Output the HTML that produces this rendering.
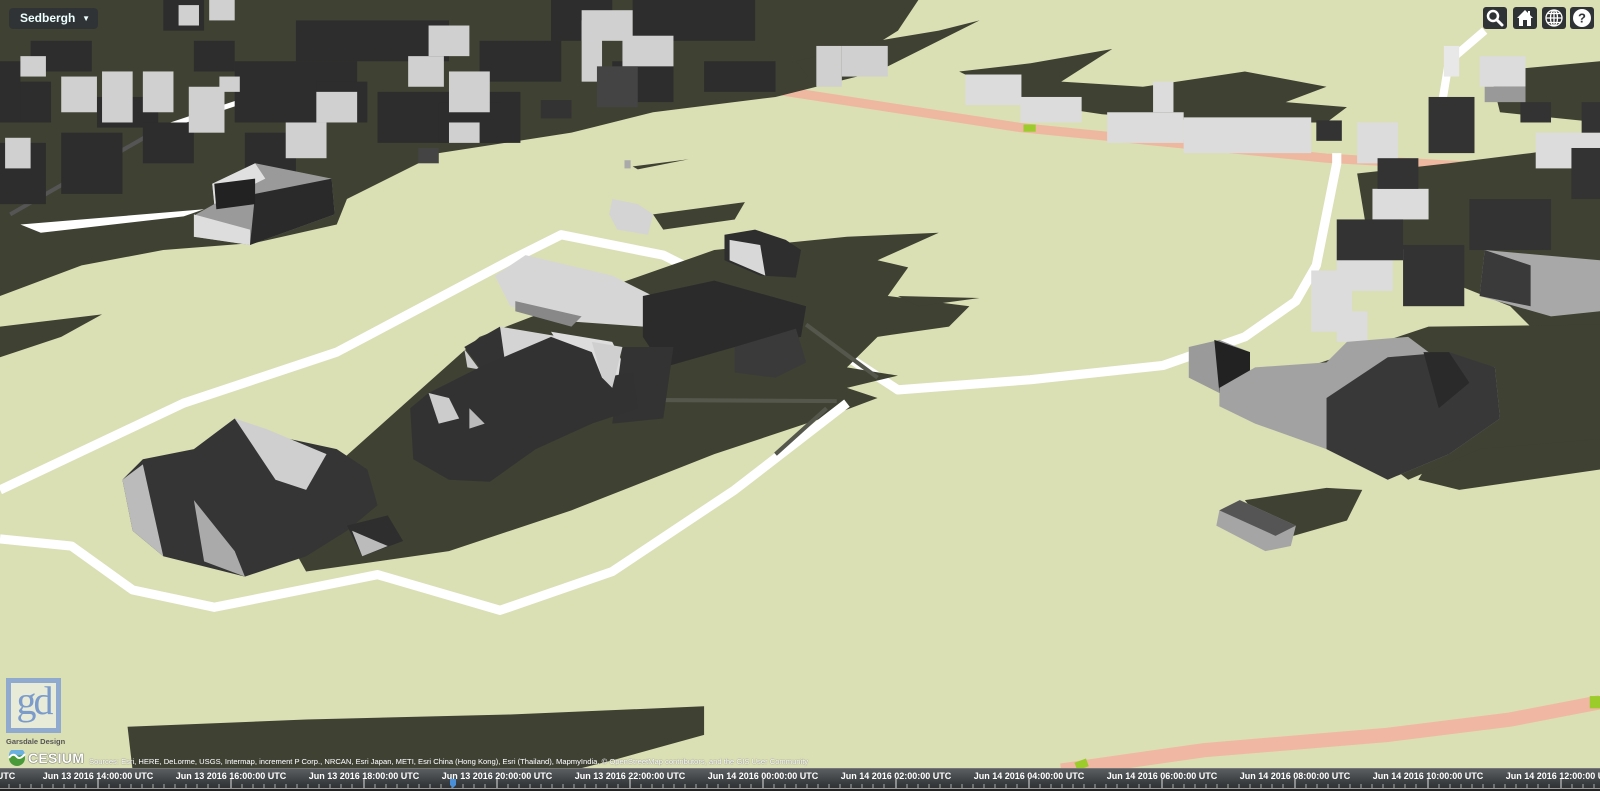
<!DOCTYPE html>
<html><head><meta charset="utf-8"><style>
html,body{margin:0;padding:0;width:1600px;height:791px;overflow:hidden;background:#dbdfb4;font-family:"Liberation Sans",sans-serif}
#map{position:absolute;left:0;top:0;width:1600px;height:791px}
.dd{position:absolute;left:9px;top:8px;width:89px;height:21px;background:#303336;border-radius:4px;color:#edffff;font-size:12px;font-weight:bold;line-height:21px;box-sizing:border-box;padding-left:11px}
.dd span{position:absolute;right:8px;top:0;font-size:8px}
.btn{position:absolute;top:7px;width:24px;height:22px;background:#303336;border-radius:3px}
.btn svg{position:absolute;left:0;top:0}
.logo{position:absolute;left:6px;top:678px;width:55px;height:55px;background:#8fa9cf;box-sizing:border-box;padding:5px}
.logo div{width:45px;height:45px;background:#e8ebd8;color:#7b9ccb;font-family:"Liberation Serif",serif;font-size:40px;line-height:36px;text-align:center;letter-spacing:-3px}
.gdt{position:absolute;left:6px;top:737px;font-size:7.5px;font-weight:bold;color:#555}
.ces{position:absolute;left:8px;top:750px;height:16px}
.ces b{position:absolute;left:20px;top:0px;font-size:14px;color:#fff;font-weight:bold;letter-spacing:0.3px;text-shadow:0 0 1px #333,0 0 1px #333}
.attr{position:absolute;left:89px;top:757px;font-size:7.6px;color:#fff;white-space:nowrap;text-shadow:0 0 1px #555}
.tl{position:absolute;left:0;top:768px;width:1600px;height:21px;background:linear-gradient(#5a5e60,#3c3f41 60%,#2c2e30);border-top:1px solid #777}
.tl .l{position:absolute;top:2px;font-size:9px;font-weight:bold;color:#fff;white-space:nowrap;transform:translateX(-50%)}
.bot{position:absolute;left:0;top:789px;width:1600px;height:2px;background:#222}
</style></head><body>
<svg id="map" viewBox="0 0 1568 775" preserveAspectRatio="none" xmlns="http://www.w3.org/2000/svg">
<rect width="1568" height="775" fill="#dbdfb4"/>
<path d="M740 85 L1000 125 L1300 155 L1568 170" stroke="#eeb8a0" stroke-width="9" fill="none"/>
<path d="M850 0 L760 80" stroke="#e8b8a0" stroke-width="5" fill="none"/>
<path d="M0 285 L120 230 L250 195" stroke="#e6b49c" stroke-width="6" fill="none"/>
<path d="M1040 755 L1180 735 L1360 720 L1480 705 L1568 688" stroke="#f0b8a2" stroke-width="14" fill="none"/>
<rect x="1054" y="745" width="12" height="8" fill="#9ccb2c" transform="rotate(-20 1060 749)"/>
<rect x="1558" y="682" width="10" height="12" fill="#9ccb2c"/>
<rect x="1003" y="122" width="12" height="7" fill="#9ccb2c"/>
<path d="M0 0 L900 0 L880 30 L840 55 L820 80 L760 95 L640 110 L560 130 L430 150 L340 195 L330 220 L250 238 L160 245 L80 260 L0 290 Z" fill="#3f4133"/>
<path d="M0 320 L100 308 L60 330 L0 350 Z" fill="#3f4133"/>
<path d="M20 220 L200 205 L180 212 L40 228 Z" fill="#fff"/>
<path d="M160 125 L250 95" stroke="#fff" stroke-width="5"/>
<path d="M10 210 L150 130" stroke="#555" stroke-width="4" fill="none"/>
<path d="M940 70 L1010 62 L1090 48 L1040 80 L1120 85 L1220 70 L1300 85 L1260 100 L1320 105 L1300 120 L1200 120 L1080 112 L1000 100 Z" fill="#3f4133"/>
<path d="M780 60 L860 40 L920 30 L960 20 L860 70 L800 85 Z" fill="#3f4133"/>
<path d="M1460 70 L1568 60 L1568 120 L1470 110 Z" fill="#3f4133"/>
<path d="M1330 170 L1420 160 L1500 150 L1568 140 L1568 460 L1430 480 L1390 470 L1420 420 L1470 380 L1560 340 L1500 320 L1480 300 L1430 280 L1390 250 L1340 230 Z" fill="#3f4133"/>
<path d="M0 480 L180 395 L330 345 L500 255 L550 230 L650 250 L770 310 L880 382 L1010 372 L1140 358 L1220 330 L1270 295 L1290 260 L1310 160 L1310 150" stroke="#fff" stroke-width="9" fill="none" stroke-linejoin="round"/>
<path d="M1410 120 L1420 60 L1455 30" stroke="#fff" stroke-width="8" fill="none"/>
<path d="M330 455 L470 330 L600 280 L700 245 L830 232 L920 228 L860 255 L890 262 L870 290 L950 300 L930 320 L860 330 L830 360 L880 368 L830 380 L860 390 L820 405 L700 445 L560 500 L440 540 L300 560 L250 470 Z" fill="#3f4133"/>
<path d="M640 210 L730 198 L720 215 L650 225 Z" fill="#3f4133"/>
<path d="M620 163 L675 156 L625 166 Z" fill="#3f4133"/>
<path d="M880 290 L960 292 L900 300 Z" fill="#3f4133"/>
<path d="M0 528 L70 535 L130 578 L210 595 L370 563 L490 598 L600 560 L720 480 L830 395" stroke="#fff" stroke-width="9" fill="none" stroke-linejoin="round"/>
<path d="M650 392 L820 393" stroke="#55574c" stroke-width="4"/>
<path d="M790 318 L860 370" stroke="#55574c" stroke-width="4"/>
<path d="M810 400 L760 445" stroke="#55574c" stroke-width="4"/>
<path d="M1250 370 L1400 320 L1568 318 L1568 430 L1450 440 L1380 470 Z" fill="#3f4133"/>
<path d="M1220 490 L1300 478 L1335 480 L1320 510 L1250 530 Z" fill="#3f4133"/>
<path d="M125 712 L300 705 L500 700 L690 692 L690 720 L600 745 L560 755 L130 755 Z" fill="#3f4133"/>
<path d="M120 470 L140 450 L190 440 L230 410 L260 425 L330 440 L360 460 L370 495 L340 520 L300 545 L240 565 L160 545 L130 520 Z" fill="#353535"/>
<path d="M120 470 L140 455 L160 545 L130 520 Z" fill="#bbb"/>
<path d="M190 490 L230 540 L240 565 L200 550 Z" fill="#aaa"/>
<path d="M230 410 L260 420 L320 445 L300 480 L270 470 L250 440 Z" fill="#cfcfcf"/>
<path d="M340 515 L380 505 L395 530 L355 545 Z" fill="#2e2e2e"/>
<path d="M345 520 L355 545 L380 535 Z" fill="#bbb"/>
<path d="M485 270 L515 250 L600 270 L640 290 L630 320 L560 315 L500 300 Z" fill="#d6d6d6"/>
<path d="M505 295 L570 310 L560 320 L505 305 Z" fill="#888"/>
<path d="M630 290 L700 275 L790 300 L785 330 L720 340 L650 360 L630 330 Z" fill="#2b2b2b"/>
<path d="M720 340 L780 322 L790 355 L760 370 L720 365 Z" fill="#3a3a3a"/>
<path d="M455 340 L490 320 L500 355 L470 360 Z" fill="#333"/>
<path d="M455 342 L470 362 L458 360 Z" fill="#ccc"/>
<path d="M490 320 L550 330 L600 340 L610 370 L560 395 L505 385 L495 355 Z" fill="#d4d4d4"/>
<path d="M540 325 L600 335 L615 365 L570 372 Z" fill="#ddd"/>
<path d="M610 340 L660 340 L650 410 L600 415 Z" fill="#333"/>
<path d="M402 400 L420 385 L470 360 L540 330 L580 345 L590 370 L620 365 L625 400 L580 415 L525 440 L480 472 L440 470 L405 450 Z" fill="#323232"/>
<path d="M420 385 L440 390 L450 410 L430 415 Z" fill="#ccc"/>
<path d="M460 400 L475 415 L460 420 Z" fill="#bbb"/>
<path d="M580 335 L610 340 L600 380 L590 370 Z" fill="#cfcfcf"/>
<path d="M600 195 L625 200 L640 210 L635 230 L605 225 L597 210 Z" fill="#d4d4d4"/>
<path d="M710 230 L740 225 L770 235 L785 245 L780 272 L745 270 L710 255 Z" fill="#2e2e2e"/>
<path d="M715 235 L745 240 L750 270 L715 255 Z" fill="#d8d8d8"/>
<g fill="#2d2d2d">
<rect x="0" y="80" width="50" height="40"/><rect x="0" y="140" width="45" height="60"/>
<rect x="60" y="130" width="60" height="60"/><rect x="95" y="95" width="60" height="30"/>
<rect x="190" y="40" width="40" height="30"/><rect x="230" y="60" width="120" height="60"/>
<rect x="290" y="20" width="150" height="40"/><rect x="370" y="90" width="140" height="50"/>
<rect x="470" y="40" width="80" height="40"/><rect x="540" y="0" width="60" height="40"/>
<rect x="620" y="0" width="120" height="40"/><rect x="430" y="100" width="60" height="40"/>
<rect x="600" y="60" width="60" height="40"/><rect x="690" y="60" width="70" height="30"/>
<rect x="160" y="0" width="40" height="30"/><rect x="240" y="130" width="50" height="40"/>
<rect x="30" y="40" width="60" height="30"/><rect x="0" y="60" width="20" height="60"/>
<rect x="140" y="120" width="50" height="40"/><rect x="310" y="80" width="50" height="40"/>
</g>
<g fill="#d0d0d0">
<rect x="5" y="135" width="25" height="30"/><rect x="60" y="75" width="35" height="35"/>
<rect x="100" y="70" width="30" height="50"/><rect x="140" y="70" width="30" height="40"/>
<rect x="185" y="85" width="35" height="45"/><rect x="215" y="75" width="20" height="15"/>
<rect x="310" y="90" width="40" height="30"/><rect x="280" y="120" width="40" height="35"/>
<rect x="400" y="55" width="35" height="30"/><rect x="440" y="70" width="40" height="40"/>
<rect x="420" y="25" width="40" height="30"/><rect x="570" y="10" width="50" height="30"/>
<rect x="610" y="35" width="50" height="30"/><rect x="570" y="20" width="20" height="60"/>
<rect x="205" y="0" width="25" height="20"/><rect x="800" y="45" width="25" height="40"/>
<rect x="825" y="45" width="45" height="30"/><rect x="440" y="120" width="30" height="20"/>
<rect x="20" y="55" width="25" height="20"/><rect x="175" y="5" width="20" height="20"/>
</g>
<path d="M208 180 L250 160 L325 175 L328 210 L245 240 L190 232 L192 210 L210 200 Z" fill="#9a9a9a"/>
<path d="M190 210 L245 225 L245 240 L190 232 Z" fill="#ddd"/>
<path d="M250 190 L325 175 L328 210 L245 240 Z" fill="#2a2a2a"/>
<path d="M208 180 L250 160 L260 175 L210 200 Z" fill="#e0e0e0"/>
<path d="M210 180 L250 175 L250 200 L212 205 Z" fill="#222"/>
<rect x="585" y="65" width="40" height="40" fill="#444"/>
<rect x="530" y="98" width="30" height="18" fill="#333"/>
<rect x="410" y="145" width="20" height="15" fill="#444"/>
<rect x="612" y="157" width="6" height="8" fill="#aaa"/>
<g fill="#dcdcdc">
<rect x="946" y="73" width="55" height="30"/><rect x="1000" y="95" width="60" height="25"/>
<rect x="1085" y="110" width="75" height="30"/><rect x="1160" y="115" width="125" height="35"/>
<rect x="1130" y="80" width="20" height="30"/><rect x="1330" y="120" width="40" height="40"/>
<rect x="1345" y="185" width="55" height="30"/><rect x="1310" y="240" width="55" height="45"/>
<rect x="1285" y="265" width="40" height="60"/><rect x="1310" y="305" width="30" height="30"/>
<rect x="1415" y="45" width="15" height="30" fill="#e8e8e8"/>
<rect x="1450" y="55" width="45" height="30"/>
<rect x="1505" y="130" width="63" height="35"/>
</g>
<g fill="#333">
<rect x="1490" y="100" width="30" height="20"/><rect x="1400" y="95" width="45" height="55"/>
<rect x="1350" y="155" width="40" height="30"/><rect x="1440" y="195" width="80" height="50"/>
<rect x="1375" y="240" width="60" height="60"/><rect x="1310" y="215" width="65" height="40"/>
<rect x="1540" y="145" width="28" height="50"/><rect x="1550" y="100" width="18" height="30"/>
<rect x="1290" y="118" width="25" height="20"/>
</g>
<path d="M1455 245 L1568 255 L1568 305 L1520 310 L1450 290 Z" fill="#a8a8a8"/>
<path d="M1455 245 L1500 260 L1500 300 L1450 290 Z" fill="#3a3a3a"/>
<path d="M1455 85 L1495 85 L1495 100 L1455 100 Z" fill="#999"/>
<path d="M1165 340 L1195 333 L1225 345 L1220 380 L1195 385 L1165 370 Z" fill="#9a9a9a"/>
<path d="M1190 333 L1225 345 L1225 380 L1195 385 Z" fill="#222"/>
<path d="M1195 380 L1230 360 L1300 355 L1320 335 L1380 330 L1400 345 L1465 360 L1470 410 L1420 445 L1360 470 L1300 440 L1230 415 L1195 398 Z" fill="#a2a2a2"/>
<path d="M1300 390 L1360 350 L1420 345 L1465 360 L1470 410 L1420 445 L1360 470 L1300 440 Z" fill="#383838"/>
<path d="M1395 345 L1420 345 L1440 375 L1410 400 Z" fill="#2a2a2a"/>
<path d="M1195 500 L1215 490 L1270 515 L1265 535 L1240 540 L1192 515 Z" fill="#a5a5a5"/>
<path d="M1195 500 L1215 490 L1270 515 L1250 525 Z" fill="#555"/>
</svg>
<div class="dd">Sedbergh<span>▼</span></div>
<div class="btn" style="left:1483px"><svg width="24" height="22"><circle cx="10" cy="9" r="5" stroke="#fff" stroke-width="2.5" fill="none"/><path d="M14 13 L19 18" stroke="#fff" stroke-width="3" stroke-linecap="round"/></svg></div>
<div class="btn" style="left:1513px"><svg width="24" height="22"><path d="M12 3 L20 11 L18 11 L18 19 L6 19 L6 11 L4 11 Z" fill="#fff"/><rect x="10" y="13" width="4" height="6" fill="#303336"/><rect x="15" y="4" width="2" height="4" fill="#fff"/></svg></div>
<div class="btn" style="left:1542px"><svg width="24" height="22"><g stroke="#fff" stroke-width="1.3" fill="none"><circle cx="12" cy="11" r="8"/><ellipse cx="12" cy="11" rx="3.5" ry="8"/><path d="M4 11 H20 M5.5 6.5 H18.5 M5.5 15.5 H18.5 M12 3 V19"/></g></svg></div>
<div class="btn" style="left:1570px"><svg width="24" height="22"><circle cx="12" cy="11" r="9" fill="#fff"/><text x="12" y="15.5" text-anchor="middle" font-family="Liberation Sans" font-weight="bold" font-size="13" fill="#303336">?</text></svg></div>
<div class="logo"><div>gd</div></div>
<div class="gdt">Garsdale Design</div>
<div class="ces"><svg width="20" height="16" style="position:absolute;left:0;top:0"><circle cx="9" cy="8" r="8" fill="#4a9a3a"/><path d="M1 6 A8 8 0 0 1 17 5" fill="#6ab0e0"/><path d="M1 8 Q5 2 9 7 Q12 10 17 4" stroke="#fff" stroke-width="2" fill="none"/></svg><b>CESIUM</b></div>
<div class="attr">Sources: Esri, HERE, DeLorme, USGS, Intermap, increment P Corp., NRCAN, Esri Japan, METI, Esri China (Hong Kong), Esri (Thailand), MapmyIndia, © OpenStreetMap contributors, and the GIS User Community</div>
<div class="tl">
<div class="l" style="left:6px">UTC</div>
<div class="l" style="left:98px">Jun 13 2016 14:00:00 UTC</div>
<div class="l" style="left:231px">Jun 13 2016 16:00:00 UTC</div>
<div class="l" style="left:364px">Jun 13 2016 18:00:00 UTC</div>
<div class="l" style="left:497px">Jun 13 2016 20:00:00 UTC</div>
<div class="l" style="left:630px">Jun 13 2016 22:00:00 UTC</div>
<div class="l" style="left:763px">Jun 14 2016 00:00:00 UTC</div>
<div class="l" style="left:896px">Jun 14 2016 02:00:00 UTC</div>
<div class="l" style="left:1029px">Jun 14 2016 04:00:00 UTC</div>
<div class="l" style="left:1162px">Jun 14 2016 06:00:00 UTC</div>
<div class="l" style="left:1295px">Jun 14 2016 08:00:00 UTC</div>
<div class="l" style="left:1428px">Jun 14 2016 10:00:00 UTC</div>
<div class="l" style="left:1561px">Jun 14 2016 12:00:00 UTC</div>
</div>
<svg width="1600" height="10" style="position:absolute;left:0;top:779px">
<g stroke="#ddd" stroke-width="1">
<path d="M98 0 V9 M231 0 V9 M364 0 V9 M497 0 V9 M630 0 V9 M763 0 V9 M896 0 V9 M1029 0 V9 M1162 0 V9 M1295 0 V9 M1428 0 V9 M1561 0 V9"/>
</g>
<g stroke="#aaa" stroke-width="1">
<path d="M9 5 V9 M20 5 V9 M31 5 V9 M42 5 V9 M53 5 V9 M64 5 V9 M75 5 V9 M86 5 V9 M109 5 V9 M120 5 V9 M131 5 V9 M142 5 V9 M153 5 V9 M164 5 V9 M175 5 V9 M186 5 V9 M197 5 V9 M208 5 V9 M219 5 V9 M242 5 V9 M253 5 V9 M264 5 V9 M275 5 V9 M286 5 V9 M297 5 V9 M308 5 V9 M319 5 V9 M330 5 V9 M341 5 V9 M352 5 V9 M375 5 V9 M386 5 V9 M397 5 V9 M408 5 V9 M419 5 V9 M430 5 V9 M441 5 V9 M452 5 V9 M463 5 V9 M474 5 V9 M485 5 V9 M508 5 V9 M519 5 V9 M530 5 V9 M541 5 V9 M552 5 V9 M563 5 V9 M574 5 V9 M585 5 V9 M596 5 V9 M607 5 V9 M618 5 V9 M641 5 V9 M652 5 V9 M663 5 V9 M674 5 V9 M685 5 V9 M696 5 V9 M707 5 V9 M718 5 V9 M729 5 V9 M740 5 V9 M751 5 V9 M774 5 V9 M785 5 V9 M796 5 V9 M807 5 V9 M818 5 V9 M829 5 V9 M840 5 V9 M851 5 V9 M862 5 V9 M873 5 V9 M884 5 V9 M907 5 V9 M918 5 V9 M929 5 V9 M940 5 V9 M951 5 V9 M962 5 V9 M973 5 V9 M984 5 V9 M995 5 V9 M1006 5 V9 M1017 5 V9 M1040 5 V9 M1051 5 V9 M1062 5 V9 M1073 5 V9 M1084 5 V9 M1095 5 V9 M1106 5 V9 M1117 5 V9 M1128 5 V9 M1139 5 V9 M1150 5 V9 M1173 5 V9 M1184 5 V9 M1195 5 V9 M1206 5 V9 M1217 5 V9 M1228 5 V9 M1239 5 V9 M1250 5 V9 M1261 5 V9 M1272 5 V9 M1283 5 V9 M1306 5 V9 M1317 5 V9 M1328 5 V9 M1339 5 V9 M1350 5 V9 M1361 5 V9 M1372 5 V9 M1383 5 V9 M1394 5 V9 M1405 5 V9 M1416 5 V9 M1439 5 V9 M1450 5 V9 M1461 5 V9 M1472 5 V9 M1483 5 V9 M1494 5 V9 M1505 5 V9 M1516 5 V9 M1527 5 V9 M1538 5 V9 M1549 5 V9 M1572 5 V9 M1583 5 V9 M1594 5 V9"/>
</g>
<path d="M450 0 L456 0 L456 6 L453 9 L450 6 Z" fill="#4a90d9"/>
<line x1="0" y1="9.5" x2="1600" y2="9.5" stroke="#999"/>
</svg>
<div class="bot"></div>
</body></html>
